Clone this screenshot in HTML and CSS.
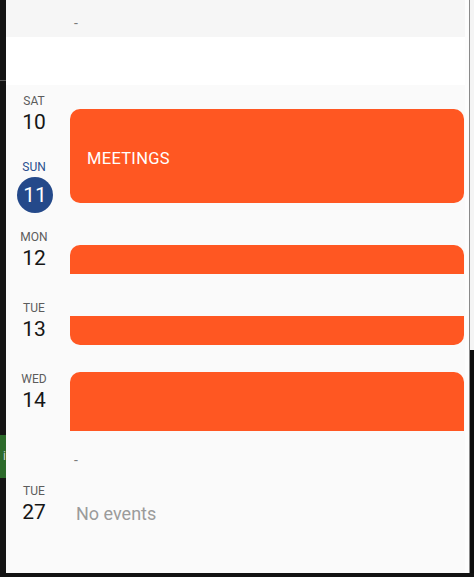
FILE: index.html
```html
<!DOCTYPE html>
<html>
<head>
<meta charset="utf-8">
<link rel="stylesheet" href="styles.css">
</head>
<body>
<div class="frame">
  <div class="edge-left">
    <div class="edge-mark"></div>
    <div class="edge-green">i</div>
  </div>
  <main class="panel">
    <div class="top-band"><span class="dash">-</span></div>
    <div class="white-band"></div>
    <div class="list">
      <div class="row row-group">
        <div class="date-col">
          <div class="date">
            <div class="dname">SAT</div>
            <div class="dnum">10</div>
          </div>
          <div class="date date-today">
            <div class="dname">SUN</div>
            <div class="dnum">11</div>
          </div>
        </div>
        <div class="events">
          <div class="event event-big"><span class="event-title">MEETINGS</span></div>
        </div>
      </div>
      <div class="row row-day">
        <div class="date-col">
          <div class="date">
            <div class="dname">MON</div>
            <div class="dnum">12</div>
          </div>
        </div>
        <div class="events">
          <div class="event event-start"></div>
        </div>
      </div>
      <div class="row row-day">
        <div class="date-col">
          <div class="date">
            <div class="dname">TUE</div>
            <div class="dnum">13</div>
          </div>
        </div>
        <div class="events">
          <div class="event event-end"></div>
        </div>
      </div>
      <div class="row row-wed">
        <div class="date-col">
          <div class="date">
            <div class="dname">WED</div>
            <div class="dnum">14</div>
          </div>
        </div>
        <div class="events">
          <div class="event event-tall"></div>
        </div>
      </div>
      <div class="gap-row"><span class="dash">-</span></div>
      <div class="row row-empty">
        <div class="date-col">
          <div class="date">
            <div class="dname">TUE</div>
            <div class="dnum">27</div>
          </div>
        </div>
        <div class="events">
          <div class="no-events">No events</div>
        </div>
      </div>
    </div>
  </main>
  <div class="scroll-strip"></div>
  <div class="edge-line"></div>
  <div class="edge-right">
    <div class="edge-right-light"></div>
  </div>
</div>
</body>
</html>
```

FILE: styles.css
```css
* { box-sizing: border-box; }

html, body {
  margin: 0;
  padding: 0;
}

body {
  width: 474px;
  height: 577px;
  overflow: hidden;
  background: #121212;
  font-family: Roboto, "Noto Sans", "Liberation Sans", sans-serif;
}

.frame {
  display: flex;
  height: 573px;
}

.edge-left {
  width: 6px;
  flex: none;
  background: #141414;
  display: flex;
  flex-direction: column;
}

.edge-mark {
  margin-top: 80px;
  height: 1px;
  background: #5a5a5a;
}

.edge-green {
  margin-top: 354px;
  height: 43px;
  background: #2c6a2a;
  color: #cfcfcf;
  font-size: 12px;
  line-height: 43px;
  text-align: right;
  overflow: hidden;
}

.panel {
  width: 459px;
  flex: none;
  display: flex;
  flex-direction: column;
}

.scroll-strip {
  width: 4px;
  flex: none;
  background: #fdfdfd;
}

.edge-line {
  width: 1px;
  flex: none;
  background: #8a8a8a;
}

.edge-right {
  flex: 1;
  background: #0e0e0e;
}

.edge-right-light {
  height: 350px;
  background: #f4f4f4;
}

.top-band {
  height: 37px;
  background: #f6f6f6;
  padding: 13px 0 0 68px;
  line-height: 20px;
}

.dash {
  font-size: 14px;
  line-height: 20px;
  color: #7a7a7a;
}

.white-band {
  height: 48px;
  background: #ffffff;
}

.list {
  flex: 1;
  background: #fafafa;
}

.row {
  display: flex;
  align-items: flex-start;
  padding-top: 9px;
}

.row-group { height: 136px; }
.row-day { height: 71px; }
.row-wed { height: 75px; }
.row-empty { padding-top: 12px; }

.date-col {
  width: 56px;
  flex: none;
  display: flex;
  flex-direction: column;
  align-items: center;
}

.date {
  display: flex;
  flex-direction: column;
  align-items: center;
}

.date-today {
  margin-top: 26px;
}

.dname {
  font-size: 12px;
  line-height: 14px;
  color: #5c5c5c;
}

.dnum {
  margin-top: 1.5px;
  font-size: 21px;
  line-height: 24px;
  color: #161616;
}

.date-today .dname {
  color: #2a4f8e;
}

.date-today .dnum {
  margin-top: 3px;
  width: 36px;
  height: 36px;
  border-radius: 50%;
  background: #24498a;
  color: #ffffff;
  line-height: 36px;
  text-align: center;
  margin-left: 2px;
}

.events {
  flex: 1;
  margin-left: 8px;
  margin-right: 1px;
}

.event {
  background: #ff5722;
  margin-top: 15px;
}

.event-big {
  height: 94px;
  border-radius: 10px;
  display: flex;
  align-items: center;
  padding: 4px 0 0 17px;
}

.event-title {
  color: #ffffff;
  font-size: 16.5px;
  letter-spacing: 0.3px;
}

.event-start {
  height: 29px;
  border-radius: 10px 10px 0 0;
}

.event-end {
  height: 29px;
  border-radius: 0 0 10px 10px;
}

.event-tall {
  margin-top: 0;
  height: 59px;
  border-radius: 10px 10px 0 0;
}

.gap-row {
  height: 34px;
  padding: 12px 0 0 68px;
  line-height: 20px;
}

.no-events {
  margin-top: 18px;
  padding-left: 6px;
  font-size: 18px;
  line-height: 24px;
  color: #9b9b9b;
}
```
